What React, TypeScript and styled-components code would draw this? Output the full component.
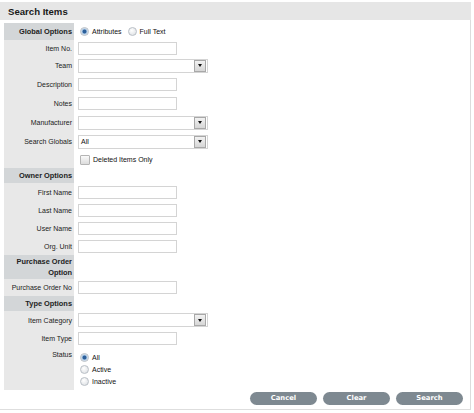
import React from "react";
import styled, { createGlobalStyle } from "styled-components";

const GlobalStyle = createGlobalStyle`
  html, body {
    margin: 0;
    padding: 0;
    background: #ffffff;
  }
  body {
    font-family: "Liberation Sans", Arial, sans-serif;
    color: #222;
  }
`;

const Page = styled.div`
  width: 471px;
  display: flex;
  flex-direction: column;
`;

const Header = styled.div`
  height: 18px;
  margin-top: 2px;
  background: #e6e6e6;
  display: flex;
  align-items: center;
  padding-left: 8px;
  font-size: 9.6px;
  font-weight: bold;
  color: #1a1a1a;
`;

const Panel = styled.div`
  border-right: 1px solid #dcdcdc;
  padding: 3px 0 0 4px;
  height: 367px;
`;

const Row = styled.div<{ $h: number }>`
  display: grid;
  grid-template-columns: 70px 1fr;
  column-gap: 4px;
  height: ${(p) => p.$h}px;
`;

const Label = styled.div<{ $top?: boolean }>`
  background: #e8e8e8;
  display: flex;
  justify-content: flex-end;
  align-items: ${(p) => (p.$top ? "flex-start" : "center")};
  padding: ${(p) => (p.$top ? "3px 2px 0 0" : "0 2px 0 0")};
  font-size: 7px;
  color: #222;
`;

const Section = styled.div`
  background: #d3d6d8;
  display: flex;
  align-items: center;
  justify-content: flex-end;
  text-align: right;
  padding-right: 2px;
  font-size: 7.4px;
  font-weight: bold;
  color: #222;
  line-height: 11px;
`;

const Field = styled.div<{ $top?: boolean }>`
  display: flex;
  align-items: ${(p) => (p.$top ? "flex-start" : "center")};
`;

const TextInput = styled.div`
  width: 97px;
  height: 11px;
  border: 1px solid #d4d4d4;
  background: #fff;
`;

const SelectBox = styled.div`
  width: 126px;
  height: 12px;
  border: 1px solid #d4d4d4;
  background: #fff;
  display: flex;
  align-items: center;
  justify-content: space-between;
  font-size: 7px;
  color: #111;
  padding-left: 2px;
`;

const SelectArrow = styled.div`
  width: 10px;
  height: 10px;
  margin-right: 1px;
  border: 1px solid #a8a8a8;
  background: linear-gradient(#f2f2f2, #d6d6d6);
  display: flex;
  align-items: center;
  justify-content: center;
  &::after {
    content: "";
    border-left: 2.5px solid transparent;
    border-right: 2.5px solid transparent;
    border-top: 3px solid #111;
  }
`;

const OptionGroup = styled.div<{ $column?: boolean }>`
  display: flex;
  flex-direction: ${(p) => (p.$column ? "column" : "row")};
  gap: ${(p) => (p.$column ? "3px" : "6px")};
  padding-left: 2px;
  padding-top: ${(p) => (p.$column ? "5px" : "0")};
`;

const Option = styled.label`
  display: flex;
  align-items: center;
  gap: 3px;
  font-size: 7px;
  color: #111;
  height: 9px;
`;

const RadioDot = styled.span<{ $checked?: boolean }>`
  width: 7px;
  height: 7px;
  border-radius: 50%;
  border: 1px solid #b9bfc6;
  background: ${(p) =>
    p.$checked
      ? "radial-gradient(circle, #2c5f9a 0 1.6px, #8fb2d6 2.2px, #e6eef6 3.5px)"
      : "radial-gradient(circle at 40% 35%, #ffffff, #d8dce0)"};
`;

const CheckBox = styled.span`
  width: 8px;
  height: 8px;
  border: 1px solid #b5b5b5;
  border-radius: 1px;
  background: linear-gradient(#fafafa, #dcdcdc);
`;

const Footer = styled.div`
  display: flex;
  justify-content: flex-end;
  gap: 6px;
  padding: 2px 7px 0 0;
  height: 17px;
  border-bottom: 1px solid #dedede;
  border-right: 1px solid #dcdcdc;
`;

const Button = styled.button`
  width: 67px;
  height: 13px;
  border: none;
  border-radius: 7px;
  background: #7e8991;
  color: #fff;
  font-family: "DejaVu Sans", Verdana, sans-serif;
  font-weight: bold;
  font-size: 6.8px;
  padding: 0;
  line-height: 13px;
`;

const Input = () => <TextInput />;

const Select: React.FC<{ value?: string }> = ({ value }) => (
  <SelectBox>
    <span>{value}</span>
    <SelectArrow />
  </SelectBox>
);

type FieldRow = { label: string; h: number; kind: "input" | "select"; value?: string };

const FormRow: React.FC<FieldRow> = ({ label, h, kind, value }) => (
  <Row $h={h}>
    <Label>{label}</Label>
    <Field>{kind === "input" ? <Input /> : <Select value={value} />}</Field>
  </Row>
);

const SectionRow: React.FC<{ h: number; children: React.ReactNode; extra?: React.ReactNode }> = ({
  h,
  children,
  extra,
}) => (
  <Row $h={h}>
    <Section>{children}</Section>
    <Field>{extra}</Field>
  </Row>
);

export default function App() {
  return (
    <>
      <GlobalStyle />
      <Page>
        <Header>Search Items</Header>
        <Panel>
          <SectionRow
            h={17}
            extra={
              <OptionGroup>
                <Option>
                  <RadioDot $checked />
                  Attributes
                </Option>
                <Option>
                  <RadioDot />
                  Full Text
                </Option>
              </OptionGroup>
            }
          >
            Global Options
          </SectionRow>
          <FormRow label="Item No." h={16} kind="input" />
          <FormRow label="Team" h={19} kind="select" />
          <FormRow label="Description" h={19} kind="input" />
          <FormRow label="Notes" h={19} kind="input" />
          <FormRow label="Manufacturer" h={19} kind="select" />
          <FormRow label="Search Globals" h={19} kind="select" value="All" />
          <Row $h={17}>
            <Label />
            <Field>
              <OptionGroup>
                <Option>
                  <CheckBox />
                  Deleted Items Only
                </Option>
              </OptionGroup>
            </Field>
          </Row>
          <SectionRow h={15}>Owner Options</SectionRow>
          <FormRow label="First Name" h={18} kind="input" />
          <FormRow label="Last Name" h={18} kind="input" />
          <FormRow label="User Name" h={18} kind="input" />
          <FormRow label="Org. Unit" h={18} kind="input" />
          <SectionRow h={24}>
            Purchase Order
            <br />
            Option
          </SectionRow>
          <FormRow label="Purchase Order No" h={17} kind="input" />
          <SectionRow h={15}>Type Options</SectionRow>
          <FormRow label="Item Category" h={18} kind="select" />
          <FormRow label="Item Type" h={19} kind="input" />
          <Row $h={42}>
            <Label $top>Status</Label>
            <Field $top>
              <OptionGroup $column>
                <Option>
                  <RadioDot $checked />
                  All
                </Option>
                <Option>
                  <RadioDot />
                  Active
                </Option>
                <Option>
                  <RadioDot />
                  Inactive
                </Option>
              </OptionGroup>
            </Field>
          </Row>
        </Panel>
        <Footer>
          <Button>Cancel</Button>
          <Button>Clear</Button>
          <Button>Search</Button>
        </Footer>
      </Page>
    </>
  );
}
